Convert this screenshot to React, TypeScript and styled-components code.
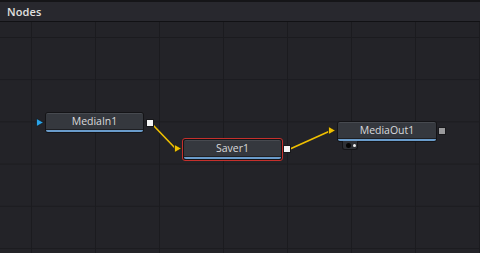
import styled, { createGlobalStyle } from "styled-components";

const GlobalStyle = createGlobalStyle`
  html, body {
    margin: 0;
    padding: 0;
    background: #1b1b1f;
  }
  * {
    box-sizing: border-box;
  }
`;

const Panel = styled.div`
  width: 480px;
  height: 253px;
  display: flex;
  flex-direction: column;
  background: #1b1b1f;
  font-family: "Open Sans", "Noto Sans", sans-serif;
  overflow: hidden;
`;

const TopStrip = styled.div`
  height: 2px;
  background: #151518;
`;

const Header = styled.div`
  height: 20px;
  display: flex;
  align-items: center;
  padding-left: 7px;
  background: #28282e;
  border-bottom: 1px solid #111114;
  color: #e0e0e0;
  font-size: 11px;
  font-weight: 600;
  letter-spacing: 0.1px;
`;

const Canvas = styled.div`
  position: relative;
  flex: 1;
  background-color: #232328;
  background-image: linear-gradient(to right, #1b1b1f 1px, transparent 1px),
    linear-gradient(to bottom, #1b1b1f 1px, transparent 1px);
  background-size: 64px 42.2px;
  background-position: 31px 15px;
`;

const Wires = styled.svg`
  position: absolute;
  left: 0;
  top: 0;
  width: 480px;
  height: 231px;
  overflow: visible;
`;

const Node = styled.div<{ $x: number; $y: number; $w: number; $h: number; $selected?: boolean }>`
  position: absolute;
  left: ${(p) => p.$x}px;
  top: ${(p) => p.$y}px;
  width: ${(p) => p.$w}px;
  height: ${(p) => p.$h}px;
  border-radius: 3px;
  border: 1px solid ${(p) => (p.$selected ? "#c5302c" : "#141417")};
  padding: ${(p) => (p.$selected ? "1px" : "0")};
  background: #141417;
`;

const NodeBody = styled.div`
  height: 100%;
  display: flex;
  flex-direction: column;
  border-radius: 2px;
  overflow: hidden;
  background: #35383e;
  border-top: 1px solid #474a50;
`;

const NodeLabel = styled.div`
  flex: 1;
  display: flex;
  align-items: center;
  justify-content: center;
  color: #dadadc;
  font-size: 10.5px;
  padding-bottom: 1px;
`;

const NodeBar = styled.div`
  height: 3px;
  border-top: 1px solid #1e1f23;
  background: #6a9ccb;
`;

const OutPort = styled.div<{ $x: number; $y: number; $dim?: boolean }>`
  position: absolute;
  left: ${(p) => p.$x}px;
  top: ${(p) => p.$y}px;
  width: 6px;
  height: 6px;
  background: ${(p) => (p.$dim ? "#9a9a9c" : "#f4f4f4")};
  outline: 1px solid #18181b;
`;

const InPort = styled.svg<{ $x: number; $y: number }>`
  position: absolute;
  left: ${(p) => p.$x}px;
  top: ${(p) => p.$y}px;
  width: 8px;
  height: 9px;
`;

const Tab = styled.div`
  position: absolute;
  left: 342px;
  top: 119px;
  width: 16px;
  height: 9px;
  display: flex;
  align-items: center;
  gap: 2px;
  padding-left: 3px;
  background: #2e3035;
  border: 1px solid #141417;
  border-top: none;
  border-radius: 0 0 3px 3px;
`;

const Dot = styled.span<{ $c: string; $s: number }>`
  width: ${(p) => p.$s}px;
  height: ${(p) => p.$s}px;
  border-radius: 50%;
  background: ${(p) => p.$c};
`;

const Triangle = ({ x, y, color }: { x: number; y: number; color: string }) => (
  <InPort $x={x} $y={y} viewBox="0 0 8 9">
    <polygon points="0.5,0.5 7.5,4.5 0.5,8.5" fill={color} stroke="#141417" strokeWidth="0.7" />
  </InPort>
);

const App = () => {
  return (
    <>
      <GlobalStyle />
      <Panel>
        <TopStrip />
        <Header>Nodes</Header>
        <Canvas>
          <Wires viewBox="0 0 480 231">
            <line x1="152" y1="102" x2="176" y2="127" stroke="#f0c000" strokeWidth="1.6" />
            <line x1="290" y1="127" x2="330" y2="109" stroke="#f0c000" strokeWidth="1.6" />
          </Wires>

          <Triangle x={36} y={96} color="#2aa3e8" />
          <Node $x={45} $y={90} $w={99} $h={21}>
            <NodeBody>
              <NodeLabel>MediaIn1</NodeLabel>
              <NodeBar />
            </NodeBody>
          </Node>
          <OutPort $x={147} $y={98} />

          <Triangle x={174} y={122} color="#f0c000" />
          <Node $x={182} $y={116} $w={101} $h={23} $selected>
            <NodeBody>
              <NodeLabel>Saver1</NodeLabel>
              <NodeBar />
            </NodeBody>
          </Node>
          <OutPort $x={284} $y={124} />

          <Triangle x={328} y={104} color="#f0c000" />
          <Node $x={337} $y={99} $w={100} $h={21}>
            <NodeBody>
              <NodeLabel>MediaOut1</NodeLabel>
              <NodeBar />
            </NodeBody>
          </Node>
          <Tab>
            <Dot $c="#050505" $s={5} />
            <Dot $c="#f0f0f0" $s={3} />
          </Tab>
          <OutPort $x={439} $y={106} $dim />
        </Canvas>
      </Panel>
    </>
  );
};

export default App;
